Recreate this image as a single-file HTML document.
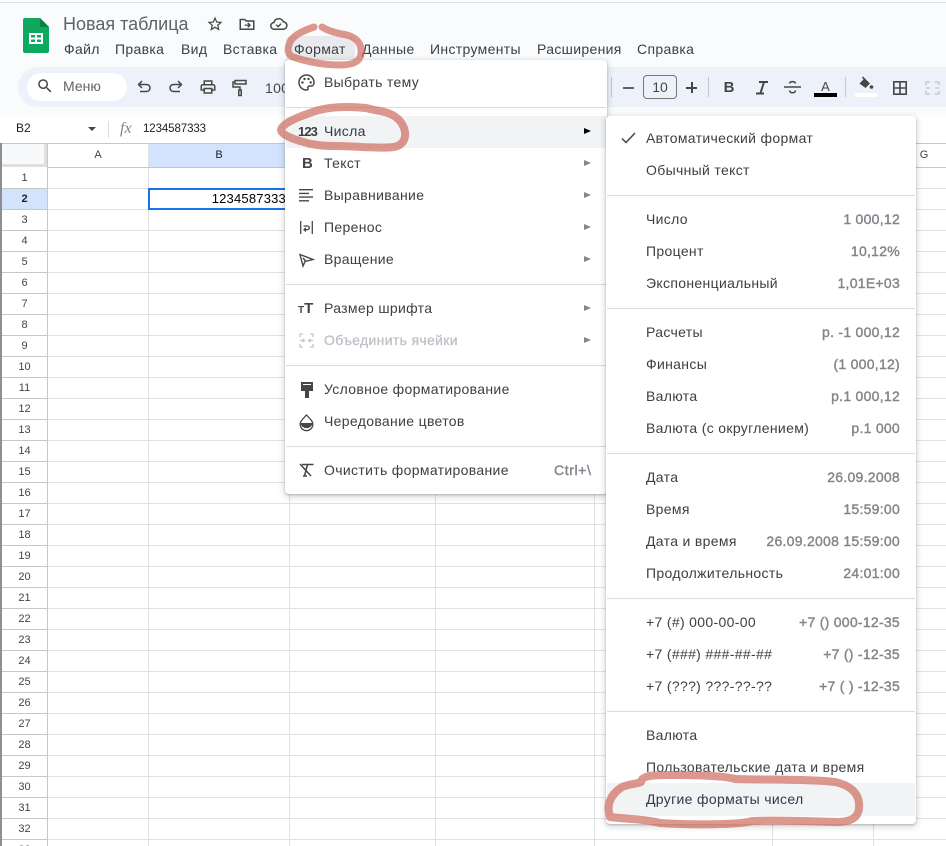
<!DOCTYPE html>
<html lang="ru"><head><meta charset="utf-8"><title>Новая таблица</title>
<style>
*{box-sizing:border-box}
html,body{margin:0;padding:0;width:946px;height:846px;overflow:hidden;background:#fff}
body{position:relative;font-family:"Liberation Sans","Noto Sans CJK SC",sans-serif;color:#3c4043}
.a{position:absolute;white-space:nowrap}
.top{left:0;top:0;width:946px;height:115px;background:#f9fbfd}
.m{top:40px;font-size:14px;line-height:18px;color:#3c4043;letter-spacing:.33px}
.lv{top:143px;width:1px;height:703px;background:#e1e1e1}
.lh{left:47px;width:899px;height:1px;background:#e1e1e1}
.rn{left:2px;width:45px;text-align:center;font-size:11px;line-height:23px;height:22px;color:#444;border-bottom:1px solid #c7c7c7}
.menu{background:#fff;border-radius:4px;box-shadow:0 2px 6px 2px rgba(60,64,67,.15),0 1px 2px rgba(60,64,67,.3)}
.t{font-size:14px;line-height:18px;color:#3c4043;letter-spacing:.33px}
.h{font-size:14px;line-height:18px;color:#80868b;right:46px;letter-spacing:.27px;-webkit-text-stroke:.4px #80868b}
.sep{height:1px;background:#dadce0}
.ar{width:0;height:0;border-left:7px solid #80868b;border-top:3.5px solid transparent;border-bottom:3.5px solid transparent;left:584px}
svg{position:absolute;overflow:visible}
</style></head><body>
<div class="a top"></div>
<div class="a" style="left:0;top:2px;width:946px;height:1px;background:#e0e0e0"></div>
<div class="a" style="left:18px;top:67px;width:928px;height:40px;background:#edf2fa;border-radius:20px 0 0 20px"></div>
<div class="a" style="left:27px;top:73px;width:100px;height:28px;background:#fff;border-radius:14px"></div>

<!-- logo -->
<svg style="left:23px;top:18px" width="26" height="35" viewBox="0 0 26 35"><path d="M2 0H17L26 9V33a2 2 0 0 1-2 2H2a2 2 0 0 1-2-2V2A2 2 0 0 1 2 0Z" fill="#0da95f"/><path d="M17 0L26 9H17Z" fill="#0b8043"/><path d="M6 15H20V26H6Z" fill="#fff"/><path d="M8 17H12V19.500H8ZM14 17H18V19.500H14ZM8 21.500H12V24H8ZM14 21.500H18V24H14Z" fill="#0da95f"/></svg>

<div class="a" style="left:63px;top:13px;font-size:18px;line-height:22px;color:#5f6368">Новая таблица</div>
<svg style="left:206px;top:15px" width="18" height="18" viewBox="0 0 24 24" fill="#444746"><path d="M22 9.240l-7.190-.62L12 2 9.190 8.630 2 9.240l5.460 4.730L5.820 21 12 17.270 18.180 21l-1.630-7.030L22 9.240zM12 15.400l-3.760 2.270 1-4.280-3.320-2.880 4.380-.38L12 6.100l1.710 4.040 4.380.38-3.320 2.880 1 4.280L12 15.400z"/></svg>
<svg style="left:238px;top:15px" width="18" height="18" viewBox="0 0 24 24" fill="none" stroke="#444746" stroke-width="2"><path d="M3 19V6h6l2 2h10v11Z"/><path d="M9 13.500h7M13 10.500l3 3-3 3" stroke-width="1.800"/></svg>
<svg style="left:269px;top:15px" width="19" height="18" viewBox="0 0 24 24" fill="none" stroke="#444746" stroke-width="2"><path d="M6.500 19A4.500 4.500 0 0 1 6 10a6.500 6.500 0 0 1 12.300-1A5 5 0 0 1 18 19Z"/><path d="M9 13l2.500 2.500L15.500 11.500" stroke-width="1.800"/></svg>

<div class="a m" style="left:64px">Файл</div>
<div class="a m" style="left:115px">Правка</div>
<div class="a m" style="left:181px">Вид</div>
<div class="a m" style="left:223px">Вставка</div>
<div class="a" style="left:286px;top:36px;width:69px;height:25px;background:#e8eaed;border-radius:4px 4px 0 0"></div>
<div class="a m" style="left:294px">Формат</div>
<div class="a m" style="left:362px">Данные</div>
<div class="a m" style="left:430px">Инструменты</div>
<div class="a m" style="left:537px">Расширения</div>
<div class="a m" style="left:637px">Справка</div>

<!-- toolbar -->
<svg style="left:36px;top:77px" width="18" height="18" viewBox="0 0 24 24" fill="#444746"><path d="M15.500 14h-.79l-.28-.27C15.410 12.590 16 11.110 16 9.500 16 5.910 13.090 3 9.500 3S3 5.910 3 9.500 5.910 16 9.500 16c1.610 0 3.090-.59 4.230-1.570l.27.28v.79l5 4.990L20.490 19l-4.990-5zm-6 0C7.010 14 5 11.990 5 9.500S7.010 5 9.500 5 14 7.010 14 9.500 11.990 14 9.500 14z"/></svg>
<div class="a" style="left:63px;top:78px;font-size:14px;line-height:17px;color:#5f6368">Меню</div>
<svg style="left:136px;top:79px" width="16" height="16" viewBox="0 0 16 16" fill="none" stroke="#444746" stroke-width="1.500"><path d="M6 2L2.500 5.500 6 9"/><path d="M3 5.500H10.500a3.500 3.500 0 0 1 0 7H4"/></svg>
<svg style="left:168px;top:79px" width="16" height="16" viewBox="0 0 16 16" fill="none" stroke="#444746" stroke-width="1.500"><path d="M10 2l3.500 3.500L10 9"/><path d="M13 5.500H5.500a3.500 3.500 0 0 0 0 7H12"/></svg>
<svg style="left:199px;top:78px" width="18" height="18" viewBox="0 0 24 24" fill="#444746"><path d="M19 8h-1V3H6v5H5c-1.660 0-3 1.340-3 3v6h4v4h12v-4h4v-6c0-1.660-1.340-3-3-3zM8 5h8v3H8V5zm8 12v2H8v-4h8v2zm2-2v-2H6v2H4v-4c0-.55.45-1 1-1h14c.55 0 1 .45 1 1v4h-2z"/></svg>
<svg style="left:232px;top:79px" width="16" height="18" viewBox="0 0 16 18" fill="none" stroke="#444746" stroke-width="1.500"><path d="M3 1.500H14V5H3Z"/><path d="M3 3H1V8H8V11"/><path d="M6.800 11H9.200V16.500H6.800Z"/></svg>
<div class="a" style="left:265px;top:79px;font-size:14px;line-height:18px;color:#444746;letter-spacing:.3px">100</div>

<div class="a" style="left:611px;top:77px;width:1px;height:20px;background:#c7c7c7"></div>
<div class="a" style="left:623px;top:86.500px;width:11px;height:2px;background:#5f6368"></div>
<div class="a" style="left:643px;top:75px;width:34px;height:24px;border:1px solid #747775;border-radius:4px;text-align:center;font-size:14px;line-height:22px;color:#444746">10</div>
<div class="a" style="left:686px;top:86.500px;width:11px;height:2px;background:#444746"></div>
<div class="a" style="left:690.500px;top:82px;width:2px;height:11px;background:#444746"></div>
<div class="a" style="left:708px;top:77px;width:1px;height:20px;background:#c7c7c7"></div>
<div class="a" style="left:722px;top:79px;width:14px;text-align:center;font-size:15px;line-height:18px;font-weight:700;color:#444746">B</div>
<svg style="left:755px;top:80px" width="14" height="15" viewBox="0 0 14 15" fill="none" stroke="#444746" stroke-width="2"><path d="M4 2H13M9 2L5.500 13M1 13.500H9"/></svg>
<svg style="left:784px;top:80px" width="17" height="15" viewBox="0 0 17 15" fill="none" stroke="#444746" stroke-width="1.500"><path d="M0 7H17"/><path d="M5.500 3.500C6 1 11 1 11.500 3.500M5.500 10.500C6 13.500 11 13.500 11.500 10.500"/></svg>
<div class="a" style="left:814px;top:79px;width:23px;text-align:center;font-size:13px;line-height:15px;color:#444746">A</div>
<div class="a" style="left:814px;top:93px;width:23px;height:4px;background:#000"></div>
<div class="a" style="left:845px;top:77px;width:1px;height:20px;background:#c7c7c7"></div>
<svg style="left:858px;top:76px" width="16" height="16" viewBox="0 0 16 16" fill="#444746"><path d="M5 .5L12 7.500 7.500 12 1.500 7.500 5.500 3.500 4 1.500Z"/><circle cx="13.500" cy="11" r="1.800"/></svg>
<div class="a" style="left:855px;top:93px;width:23px;height:4px;background:#fff"></div>
<svg style="left:893px;top:81px" width="14" height="14" viewBox="0 0 14 14" fill="none" stroke="#444746" stroke-width="1.600"><path d="M.8.8H13.200V13.200H.8ZM7 .8V13.200M.8 7H13.200"/></svg>
<svg style="left:925px;top:81px" width="15" height="14" viewBox="0 0 15 14" fill="none" stroke="#bdc1c6" stroke-width="1.300"><path d="M1 4V1H5M10 1H14V4M1 10V13H5M10 13H14V10M1 7H5M14 7H10"/></svg>

<!-- formula bar -->
<div class="a" style="left:16px;top:121px;font-size:12px;line-height:15px;color:#202124">B2</div>
<div class="a" style="left:88px;top:127px;width:0;height:0;border-top:4px solid #444746;border-left:4px solid transparent;border-right:4px solid transparent"></div>
<div class="a" style="left:108px;top:121px;width:1px;height:17px;background:#dadce0"></div>
<div class="a" style="left:120px;top:120px;font-family:'Liberation Serif',serif;font-style:italic;font-size:16px;line-height:17px;color:#80868b">fx</div>
<div class="a" style="left:143px;top:122px;font-size:11.500px;line-height:14px;color:#202124;letter-spacing:-.1px">1234587333</div>

<!-- grid -->
<div class="a" style="left:0;top:143px;width:2px;height:703px;background:#8e8e8e"></div>
<div class="a" style="left:2px;top:143px;width:944px;height:1px;background:#c7c7c7"></div>
<div class="a" style="left:2px;top:144px;width:42px;height:20px;background:#f8f9fa"></div>
<div class="a" style="left:44px;top:144px;width:3px;height:23px;background:#dfdfdf"></div>
<div class="a" style="left:2px;top:164px;width:45px;height:3px;background:#dfdfdf"></div>
<div class="a" style="left:148px;top:144px;width:141px;height:23px;background:#d3e3fd"></div>
<div class="a" style="left:2px;top:188px;width:45px;height:21px;background:#d3e3fd"></div>
<div class="a" style="left:48px;top:144px;width:100px;text-align:center;font-size:11px;line-height:23px;color:#444">A</div>
<div class="a" style="left:149px;top:144px;width:140px;text-align:center;font-size:11px;line-height:23px;color:#222">B</div>
<div class="a" style="left:916px;top:144px;width:16px;text-align:center;font-size:11px;line-height:23px;color:#444">G</div>
<div class="a lv" style="left:47px;background:#c7c7c7"></div>
<div class="a lv" style="left:148px"></div><div class="a lv" style="left:289px"></div><div class="a lv" style="left:435px"></div><div class="a lv" style="left:594px"></div><div class="a lv" style="left:772px"></div><div class="a lv" style="left:873px"></div>
<div class="a" style="left:47px;top:167px;width:899px;height:1px;background:#c7c7c7"></div>
<div class="a" style="left:48px;top:168px;width:898px;height:678px;background:repeating-linear-gradient(to bottom,transparent 0,transparent 20px,#e1e1e1 20px,#e1e1e1 21px)"></div>
<div class="a rn" style="top:167px">1</div><div class="a rn" style="top:188px;font-weight:700;color:#222">2</div><div class="a rn" style="top:209px">3</div><div class="a rn" style="top:230px">4</div><div class="a rn" style="top:251px">5</div><div class="a rn" style="top:272px">6</div><div class="a rn" style="top:293px">7</div><div class="a rn" style="top:314px">8</div><div class="a rn" style="top:335px">9</div><div class="a rn" style="top:356px">10</div><div class="a rn" style="top:377px">11</div><div class="a rn" style="top:398px">12</div><div class="a rn" style="top:419px">13</div><div class="a rn" style="top:440px">14</div><div class="a rn" style="top:461px">15</div><div class="a rn" style="top:482px">16</div><div class="a rn" style="top:503px">17</div><div class="a rn" style="top:524px">18</div><div class="a rn" style="top:545px">19</div><div class="a rn" style="top:566px">20</div><div class="a rn" style="top:587px">21</div><div class="a rn" style="top:608px">22</div><div class="a rn" style="top:629px">23</div><div class="a rn" style="top:650px">24</div><div class="a rn" style="top:671px">25</div><div class="a rn" style="top:692px">26</div><div class="a rn" style="top:713px">27</div><div class="a rn" style="top:734px">28</div><div class="a rn" style="top:755px">29</div><div class="a rn" style="top:776px">30</div><div class="a rn" style="top:797px">31</div><div class="a rn" style="top:818px">32</div><div class="a rn" style="top:839px">33</div>
<div class="a" style="left:148px;top:188px;width:142px;height:22px;border:2px solid #1a73e8;background:#fff"></div>
<div class="a" style="left:150px;top:190px;width:136px;text-align:right;font-size:13px;line-height:18px;color:#000;letter-spacing:.2px">1234587333</div>

<!-- format menu -->
<div class="a menu" style="left:285px;top:60px;width:322px;height:434px"></div>
<div class="a" style="left:286px;top:116px;width:321px;height:32px;background:#f1f3f4"></div>
<div class="a sep" style="left:286px;top:107px;width:320px"></div>
<div class="a sep" style="left:286px;top:284px;width:320px"></div>
<div class="a sep" style="left:286px;top:365px;width:320px"></div>
<div class="a sep" style="left:286px;top:446px;width:320px"></div>

<div class="a t" style="left:324px;top:73px">Выбрать тему</div>
<div class="a t" style="left:324px;top:122px;color:#303a4d">Числа</div>
<div class="a t" style="left:324px;top:154px">Текст</div>
<div class="a t" style="left:324px;top:186px">Выравнивание</div>
<div class="a t" style="left:324px;top:218px">Перенос</div>
<div class="a t" style="left:324px;top:250px">Вращение</div>
<div class="a t" style="left:324px;top:299px">Размер шрифта</div>
<div class="a t" style="left:324px;top:331px;color:#bdc1c6;-webkit-text-stroke:.3px #bdc1c6">Объединить ячейки</div>
<div class="a t" style="left:324px;top:380px">Условное форматирование</div>
<div class="a t" style="left:324px;top:412px">Чередование цветов</div>
<div class="a t" style="left:324px;top:461px">Очистить форматирование</div>
<div class="a t" style="left:554px;top:461px;color:#80868b;letter-spacing:.6px;-webkit-text-stroke:.4px #80868b">Ctrl+\</div>

<div class="a ar" style="top:127.500px;border-left-color:#000"></div>
<div class="a ar" style="top:159.500px"></div><div class="a ar" style="top:191.500px"></div><div class="a ar" style="top:223.500px"></div><div class="a ar" style="top:255.500px"></div><div class="a ar" style="top:304.500px"></div><div class="a ar" style="top:336.500px"></div>

<!-- menu icons -->
<svg style="left:298px;top:74px" width="17" height="17" viewBox="0 0 17 17" fill="none" stroke="#444746" stroke-width="1.500"><path d="M8.500 1C4.300 1 1 4.300 1 8.500S4.300 16 8.500 16c1.200 0 1.800-.8 1.500-1.800-.4-1.200.2-2.200 1.500-2.200h2C15 12 16 10.500 16 8.500 16 4.300 12.700 1 8.500 1Z"/><g fill="#444746" stroke="none"><circle cx="4.500" cy="8.500" r="1.200"/><circle cx="6.500" cy="5" r="1.200"/><circle cx="10.500" cy="5" r="1.200"/><circle cx="12.700" cy="8.500" r="1.200"/></g></svg>
<div class="a" style="left:298px;top:124px;width:20px;font-size:13px;line-height:15px;font-weight:700;color:#3c4043;letter-spacing:-.9px">123</div>
<div class="a" style="left:302px;top:155px;font-size:15px;line-height:18px;font-weight:700;color:#444746">B</div>
<svg style="left:299px;top:189px" width="15" height="13" viewBox="0 0 15 13" fill="#444746"><path d="M0 0H14V1.400H0ZM0 3.700H10V5.100H0ZM0 7.400H14V8.800H0ZM0 11.100H10V12.500H0Z"/></svg>
<svg style="left:300px;top:221px" width="13" height="13" viewBox="0 0 13 13" fill="none" stroke="#444746" stroke-width="1.300"><path d="M.7 0V13M12.300 0V13"/><path d="M3.500 5H7.500a1.800 1.800 0 0 1 0 3.600H4.500M6 6.800L4 8.600 6 10.500"/></svg>
<svg style="left:299px;top:253px" width="15" height="14" viewBox="0 0 15 14" fill="none" stroke="#444746" stroke-width="1.400"><path d="M1 1.500L14 6.500 6 8.500 4 13Z"/><path d="M4 5L7 8.500"/></svg>
<div class="a" style="left:298px;top:299px;width:18px;font-size:15px;line-height:19px;font-weight:700;color:#444746"><span style="font-size:10px">T</span>T</div>
<svg style="left:299px;top:333px" width="15" height="15" viewBox="0 0 15 15" fill="none" stroke="#c4c7c5" stroke-width="1.300"><path d="M1 4V1H4M11 1H14V4M1 11V14H4M11 14H14V11M1 7.500H5M3.500 6L5.500 7.500 3.500 9M14 7.500H10M11.500 6L9.500 7.500 11.500 9"/></svg>
<svg style="left:301px;top:382px" width="12" height="16" viewBox="0 0 12 16" fill="#444746"><path d="M0 0H12V9H0Z"/><path d="M4 9H8V16H4Z"/><path d="M2 2H10V3H2Z" fill="#fff"/></svg>
<svg style="left:299px;top:414px" width="15" height="16" viewBox="0 0 15 16"><path d="M7.500 1L12.500 6.500A6.300 6.300 0 1 1 2.500 6.500Z" fill="none" stroke="#444746" stroke-width="1.300"/><path d="M1.300 9H13.700A6.300 6.300 0 0 1 1.300 9Z" fill="#444746"/></svg>
<svg style="left:299px;top:463px" width="15" height="14" viewBox="0 0 15 14" fill="none" stroke="#444746" stroke-width="1.500"><path d="M3 1.500H14.500M8.500 1.500L5.500 13M4 13H8M1 1L12 13"/></svg>

<!-- numbers submenu -->
<div class="a menu" style="left:606px;top:116px;width:310px;height:708px"></div>
<div class="a" style="left:607px;top:783px;width:308px;height:33px;background:#f1f3f4"></div>
<div class="a sep" style="left:607px;top:195px;width:308px"></div>
<div class="a sep" style="left:607px;top:308px;width:308px"></div>
<div class="a sep" style="left:607px;top:453px;width:308px"></div>
<div class="a sep" style="left:607px;top:598px;width:308px"></div>
<div class="a sep" style="left:607px;top:711px;width:308px"></div>
<svg style="left:621px;top:132px" width="15" height="12" viewBox="0 0 15 12" fill="none" stroke="#444746" stroke-width="1.500"><path d="M1 6.500L5 10.500 14 1"/></svg>

<div class="a t" style="left:646px;top:129px">Автоматический формат</div>
<div class="a t" style="left:646px;top:161px">Обычный текст</div>
<div class="a t" style="left:646px;top:210px">Число</div><div class="a h" style="top:210px">1 000,12</div>
<div class="a t" style="left:646px;top:242px">Процент</div><div class="a h" style="top:242px">10,12%</div>
<div class="a t" style="left:646px;top:274px">Экспоненциальный</div><div class="a h" style="top:274px">1,01E+03</div>
<div class="a t" style="left:646px;top:323px">Расчеты</div><div class="a h" style="top:323px">р. -1 000,12</div>
<div class="a t" style="left:646px;top:355px">Финансы</div><div class="a h" style="top:355px">(1 000,12)</div>
<div class="a t" style="left:646px;top:387px">Валюта</div><div class="a h" style="top:387px">р.1 000,12</div>
<div class="a t" style="left:646px;top:419px">Валюта (с округлением)</div><div class="a h" style="top:419px">р.1 000</div>
<div class="a t" style="left:646px;top:468px">Дата</div><div class="a h" style="top:468px">26.09.2008</div>
<div class="a t" style="left:646px;top:500px">Время</div><div class="a h" style="top:500px">15:59:00</div>
<div class="a t" style="left:646px;top:532px">Дата и время</div><div class="a h" style="top:532px">26.09.2008 15:59:00</div>
<div class="a t" style="left:646px;top:564px">Продолжительность</div><div class="a h" style="top:564px">24:01:00</div>
<div class="a t" style="left:646px;top:613px">+7 (#) 000-00-00</div><div class="a h" style="top:613px">+7 () 000-12-35</div>
<div class="a t" style="left:646px;top:645px">+7 (###) ###-##-##</div><div class="a h" style="top:645px">+7 () -12-35</div>
<div class="a t" style="left:646px;top:677px">+7 (???) ???-??-??</div><div class="a h" style="top:677px">+7 ( ) -12-35</div>
<div class="a t" style="left:646px;top:726px">Валюта</div>
<div class="a t" style="left:646px;top:758px">Пользовательские дата и время</div>
<div class="a t" style="left:646px;top:790px;color:#303a4d">Другие форматы чисел</div>

<!-- hand drawn highlights -->
<svg style="left:0;top:0" width="946" height="846" viewBox="0 0 946 846" fill="none" stroke="#cf6f63" stroke-opacity=".72" stroke-linecap="round" stroke-linejoin="round">
<path stroke-width="7" d="M314 27C302 31 293 36 290 42C287 49 287 54 293 57C308 62 325 65 340 65C352 65 360 62 361 54C362 45 358 38 347 35C336 33 328 31 322 27"/>
<path stroke-width="8" d="M366 108C345 106 325 107 310 113C295 118 282 124 281 130C281 134 290 138 300 141C312 145 322 146 335 146C355 146 380 149 394 147C404 145 407 137 404 128C400 118 392 113 380 111C374 110 370 109 366 108Z"/>
<path stroke-width="8" d="M641 782C642 776 650 775 670 775C700 775 725 776 735 779C770 780 810 779 835 782C850 785 858 793 859 803C860 815 855 821 840 822C800 821 770 820 752 821C740 825 690 825 660 823C645 819 625 819 610 817C606 805 610 795 622 787C630 784 636 784 641 782Z"/>
</svg>
</body></html>
